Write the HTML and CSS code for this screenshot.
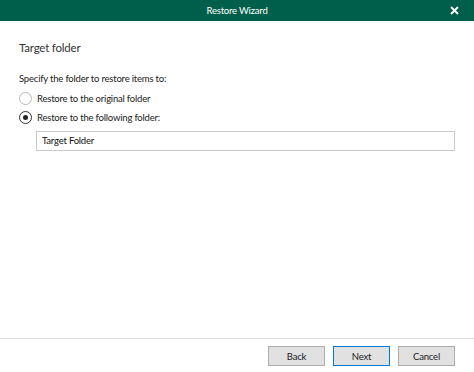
FILE: index.html
```html
<!DOCTYPE html>
<html lang="en">
<head>
    <meta charset="UTF-8">
    <title>Restore Wizard</title>
    <link rel="stylesheet" href="styles.css">
</head>
<body>
    <div class="wizard">
        <div class="titlebar">
            <span class="title">Restore Wizard</span>
            <span class="close">
                <svg width="9" height="9" viewBox="0 0 9 9"><path d="M1 1L8 8M8 1L1 8" stroke="#fff" stroke-width="1.8"/></svg>
            </span>
        </div>

        <div class="content">
            <h1>Target folder</h1>
            <div class="prompt">Specify the folder to restore items to:</div>
            <label class="option"><span class="radio"></span>Restore to the original folder</label>
            <label class="option"><span class="radio checked"></span>Restore to the following folder:</label>
            <div class="textbox">Target Folder</div>
        </div>

        <div class="footer">
            <button class="btn">Back</button>
            <button class="btn primary">Next</button>
            <button class="btn">Cancel</button>
        </div>
    </div>
</body>
</html>
```

FILE: styles.css
```css
body {
    margin: 0;
    font-family: Lato, "Noto Sans", sans-serif;
    font-size: 9.5px;
    letter-spacing: -0.2px;
    color: #222;
    background: #fff;
}
.wizard {
    width: 474px;
    height: 372px;
    display: flex;
    flex-direction: column;
}
.titlebar {
    height: 21px;
    background: #005f4a;
    color: #fff;
    display: flex;
    align-items: center;
    justify-content: center;
    position: relative;
}
.title {
    font-size: 9.5px;
}
.close {
    position: absolute;
    right: 15px;
    top: 6px;
    line-height: 0;
}
.content {
    flex: 1;
    padding: 20px 19px 0 19px;
}
h1 {
    margin: 0 0 19px 0;
    font-size: 11.5px;
    font-weight: normal;
    color: #333;
}
.prompt {
    margin-bottom: 5px;
}
.option {
    display: flex;
    align-items: center;
    height: 19px;
}
.radio {
    width: 11px;
    height: 11px;
    border: 1px solid #b8b8b8;
    border-radius: 50%;
    margin-right: 5px;
    position: relative;
    box-sizing: content-box;
}
.radio.checked {
    border-color: #333;
}
.radio.checked::after {
    content: "";
    position: absolute;
    left: 3px;
    top: 3px;
    width: 5px;
    height: 5px;
    border-radius: 50%;
    background: #222;
}
.textbox {
    margin: 4px 0 0 17px;
    height: 18px;
    border: 1px solid #c8c8c8;
    padding-left: 5px;
    line-height: 18px;
    color: #111;
}
.footer {
    box-sizing: border-box;
    height: 34px;
    border-top: 1px solid #dcdcdc;
    display: flex;
    justify-content: flex-end;
    align-items: flex-start;
    padding: 7px 19px 0 0;
    gap: 8px;
}
.btn {
    width: 57px;
    height: 20px;
    font-family: inherit;
    font-size: 9.5px;
    letter-spacing: -0.2px;
    color: #222;
    background: #e1e1e1;
    border: 1px solid #adadad;
    padding: 0;
}
.btn.primary {
    border-color: #0078d7;
}
```
